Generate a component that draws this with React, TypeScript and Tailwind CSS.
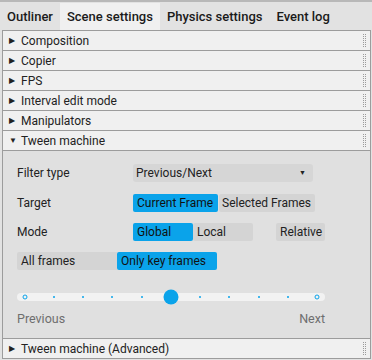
import React from 'react';

const SECTIONS = ['Composition', 'Copier', 'FPS', 'Interval edit mode', 'Manipulators'];
const TABS = ['Outliner', 'Scene settings', 'Physics settings', 'Event log'];
const DOTS = [24, 53, 82, 111, 141, 199, 228, 258, 287, 316];

function Grip() {
  return (
    <div className="grid grid-cols-2 gap-x-[1px] gap-y-[1px] mr-[4px]">
      {Array.from({ length: 14 }).map((_, i) => (
        <span key={i} className="w-[1px] h-[1px] bg-[#9a9a9a]" />
      ))}
    </div>
  );
}

function Header({ label, open }: { label: string; open?: boolean }) {
  return (
    <div className="h-[20px] flex items-center bg-[#f0f0f0] border-b border-[#9c9c9c]">
      <span className="w-[18px] pl-[6px] text-[8px] text-[#222] leading-none">{open ? '▼' : '▶'}</span>
      <span className="flex-1 text-[12px] text-[#222] whitespace-nowrap">{label}</span>
      <Grip />
    </div>
  );
}

function Seg({ label, active, className = '' }: { label: string; active?: boolean; className?: string }) {
  return (
    <div
      className={`shrink-0 h-[18px] flex items-center px-[4px] text-[12px] whitespace-nowrap rounded-[2px] ${
        active ? 'bg-[#0aa3ea] text-[#111]' : 'bg-[#d4d4d4] text-[#222]'
      } ${className}`}
    >
      {label}
    </div>
  );
}

export default function App() {
  return (
    <div
      className="w-[372px] h-[360px] bg-[#e2e2e2] overflow-hidden"
      style={{ fontFamily: 'Roboto, "Liberation Sans", sans-serif' }}
    >
      {/* Tabs */}
      <div className="border-t-2 border-[#b8b8b8] h-[30px] flex items-stretch bg-[#e2e2e2] pt-[1px]">
        {TABS.map((t, i) => (
          <div
            key={t}
            className={`flex items-center px-[7px] text-[13px] font-medium text-[#1a1a1a] ${
              i === 1 ? 'bg-[#f0f0f0]' : ''
            }`}
          >
            {t}
          </div>
        ))}
      </div>

      {/* Sections */}
      <div className="ml-[2px] mr-[1px] border-x border-t border-[#9c9c9c]">
        {SECTIONS.map((s) => (
          <Header key={s} label={s} />
        ))}
        <Header label="Tween machine" open />

        <div className="bg-[#e0e0e0] border-b border-[#9c9c9c] pl-[14px] pt-[13px] pb-[11px] text-[12px] text-[#222]">
          <div className="flex items-center h-[18px]">
            <span className="w-[116px] shrink-0">Filter type</span>
            <div className="w-[180px] h-[18px] bg-[#d6d6d6] rounded-[3px] flex items-center pl-[3px] pr-[7px]">
              <span className="flex-1">Previous/Next</span>
              <span className="text-[7px]">▼</span>
            </div>
          </div>

          <div className="flex items-center h-[18px] mt-[12px]">
            <span className="w-[116px] shrink-0">Target</span>
            <Seg label="Current Frame" active className="w-[85px]" />
            <Seg label="Selected Frames" className="w-[96px] ml-[1px] pl-[3px]" />
          </div>

          <div className="flex items-center h-[18px] mt-[11px]">
            <span className="w-[116px] shrink-0">Mode</span>
            <Seg label="Global" active className="w-[60px]" />
            <Seg label="Local" className="w-[60px]" />
            <Seg label="Relative" className="w-[49px] ml-[23px]" />
          </div>

          <div className="flex items-center h-[18px] mt-[11px]">
            <Seg label="All frames" className="w-[100px] rounded-r-none" />
            <Seg label="Only key frames" active className="w-[100px]" />
          </div>

          {/* Slider */}
          <div className="relative w-[308px] h-[8px] mt-[23px] bg-[#f2f2f2] rounded-full">
            {DOTS.map((x, i) => (
              <span
                key={x}
                className={`absolute top-1/2 -translate-y-1/2 -translate-x-1/2 rounded-full ${
                  i === 0 || i === DOTS.length - 1
                    ? 'w-[5px] h-[5px] border border-[#0aa3ea]'
                    : 'w-[2px] h-[2px] bg-[#0aa3ea]'
                }`}
                style={{ left: x - 16 }}
              />
            ))}
            <span className="absolute top-1/2 left-[154px] -translate-y-1/2 -translate-x-1/2 w-[15px] h-[15px] rounded-full bg-[#0aa3ea]" />
          </div>

          <div className="w-[308px] flex justify-between mt-[10px] leading-[16px] text-[12.5px] text-[#6e6e6e]">
            <span>Previous</span>
            <span>Next</span>
          </div>
        </div>

        <Header label="Tween machine (Advanced)" />
      </div>
    </div>
  );
}
